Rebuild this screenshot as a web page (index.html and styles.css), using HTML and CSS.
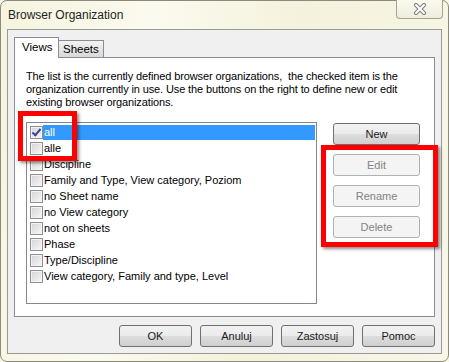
FILE: index.html
```html
<!DOCTYPE html>
<html lang="en">
<head>
<meta charset="UTF-8">
<title>Browser Organization</title>
<link rel="stylesheet" href="styles.css">
</head>
<body>

<div class="window">
    <div class="titlebar">
        <span class="title">Browser Organization</span>
        <div class="close">
            <svg width="18" height="12" viewBox="0 0 18 12">
                <path d="M5 2 L13 10 M13 2 L5 10" stroke="#7d7d7d" stroke-width="4" stroke-linecap="round"/>
                <path d="M5 2 L13 10 M13 2 L5 10" stroke="#fff" stroke-width="2" stroke-linecap="round"/>
            </svg>
        </div>
    </div>

    <div class="client">
        <div class="tabs">
            <div class="tab active">Views</div>
            <div class="tab">Sheets</div>
        </div>

        <div class="panel">
            <p class="info">The list is the currently defined browser organizations,&nbsp; the checked item is the organization currently in use. Use the buttons on the right to define new or edit existing browser organizations.</p>

            <div class="content">
                <div class="list">
                    <div class="row"><span class="check on"></span><span class="label selected">all</span></div>
                    <div class="row"><span class="check"></span><span class="label">alle</span></div>
                    <div class="row"><span class="check"></span><span class="label">Discipline</span></div>
                    <div class="row"><span class="check"></span><span class="label">Family and Type, View category, Poziom</span></div>
                    <div class="row"><span class="check"></span><span class="label">no Sheet name</span></div>
                    <div class="row"><span class="check"></span><span class="label">no View category</span></div>
                    <div class="row"><span class="check"></span><span class="label">not on sheets</span></div>
                    <div class="row"><span class="check"></span><span class="label">Phase</span></div>
                    <div class="row"><span class="check"></span><span class="label">Type/Discipline</span></div>
                    <div class="row"><span class="check"></span><span class="label">View category, Family and type, Level</span></div>
                </div>

                <div class="side">
                    <button class="btn">New</button>
                    <button class="btn" disabled>Edit</button>
                    <button class="btn" disabled>Rename</button>
                    <button class="btn" disabled>Delete</button>
                </div>
            </div>
        </div>

        <div class="footer">
            <button class="btn">OK</button>
            <button class="btn">Anuluj</button>
            <button class="btn">Zastosuj</button>
            <button class="btn">Pomoc</button>
        </div>
    </div>

    <!-- red marks from the screenshot -->
    <div class="mark mark-checks"></div>
    <div class="mark mark-buttons"></div>
</div>

</body>
</html>
```

FILE: styles.css
```css
body {
    margin: 0;
    background: #f7f5e3;
    font-family: "Liberation Sans", Arial, sans-serif;
    font-size: 11px;
    color: #000;
}

.window {
    position: relative;
    box-sizing: border-box;
    width: 449px;
    height: 362px;
    border: 1px solid #8c8a7c;
    border-radius: 7px;
    background: linear-gradient(100deg, #f6f4df 0%, #fbfaee 30%, #f4f2dc 60%, #f8f7e8 100%);
    display: flex;
    flex-direction: column;
}

.titlebar {
    height: 28px;
    display: flex;
    align-items: center;
    padding-left: 7px;
    position: relative;
}

.title {
    font-size: 12px;
    color: #1e1e1e;
}

.close {
    position: absolute;
    top: -1px;
    right: 5px;
    width: 47px;
    height: 19px;
    box-sizing: border-box;
    border: 1px solid #a5a395;
    border-top: none;
    border-radius: 0 0 4px 4px;
    background: linear-gradient(#fbfaf0, #efeddc);
    display: flex;
    align-items: center;
    justify-content: center;
}

.client {
    box-sizing: border-box;
    margin: 0 6px;
    height: 325px;
    border: 1px solid #9a9a94;
    background: #f0f0f0;
    padding: 7px 6px 0 6px;
    display: flex;
    flex-direction: column;
}

.tabs {
    display: flex;
    align-items: flex-end;
    height: 20px;
}

.tab {
    box-sizing: border-box;
    height: 17px;
    padding: 0 4px 0 4px;
    border: 1px solid #898c95;
    border-bottom: none;
    border-left: none;
    background: linear-gradient(#f3f3f3, #d8d8d8);
    font-size: 11.5px;
    line-height: 17px;
}

.tab.active {
    width: 45px;
    height: 21px;
    margin-bottom: -1px;
    padding: 0 0 0 7px;
    border-left: 1px solid #898c95;
    background: #fff;
    position: relative;
    z-index: 1;
    line-height: 18px;
}

.panel {
    box-sizing: border-box;
    height: 260px;
    background: #fff;
    border: 1px solid #898c95;
    padding: 12px 14px 0 11px;
}

.info {
    margin: 0;
    line-height: 13px;
    letter-spacing: -0.12px;
    color: #000;
}

.content {
    display: flex;
    gap: 16px;
    margin-top: 13px;
}

.list {
    box-sizing: border-box;
    width: 291px;
    height: 182px;
    border: 1px solid #828790;
    padding: 1px 0 0 3px;
}

.row {
    display: flex;
    align-items: center;
    height: 16px;
}

.check {
    box-sizing: border-box;
    width: 13px;
    height: 13px;
    flex: none;
    border: 1px solid #8e8f8f;
    background: linear-gradient(135deg, #d4d4d4, #f7f7f7);
    box-shadow: inset 0 0 0 1px #f4f4f4;
    position: relative;
}

.check.on::after {
    content: "";
    position: absolute;
    left: 3px;
    top: 0px;
    width: 3px;
    height: 7px;
    border: solid #35459a;
    border-width: 0 2px 2px 0;
    transform: rotate(40deg);
}

.label {
    flex: 1;
    height: 15px;
    line-height: 15px;
    padding-left: 1px;
    white-space: nowrap;
    font-size: 11px;
}

.label.selected {
    background: #3399ff;
    color: #fff;
    margin-right: 1px;
}

.side {
    display: flex;
    flex-direction: column;
    gap: 9px;
    padding-top: 1px;
}

.btn {
    box-sizing: border-box;
    width: 87px;
    height: 22px;
    border: 1px solid #707070;
    border-radius: 3px;
    background: linear-gradient(#f2f2f2 0%, #ebebeb 48%, #dddddd 52%, #cfcfcf 100%);
    font-family: "Liberation Sans", Arial, sans-serif;
    font-size: 11px;
    font-weight: normal;
    color: #1a1a1a;
    padding: 0;
}

.btn:disabled {
    border-color: #adb2b5;
    background: #f4f4f4;
    color: #838383;
}

.footer {
    display: flex;
    justify-content: flex-end;
    gap: 8px;
    margin-top: 8px;
}

.footer .btn {
    width: 73px;
}

.mark {
    position: absolute;
    box-sizing: border-box;
    border: 5px solid #ff0000;
    box-shadow: 2px 2px 3px rgba(0, 0, 0, 0.45);
}

.mark-checks {
    left: 17px;
    top: 110px;
    width: 59px;
    height: 50px;
}

.mark-buttons {
    left: 320px;
    top: 144px;
    width: 117px;
    height: 102px;
}
```
